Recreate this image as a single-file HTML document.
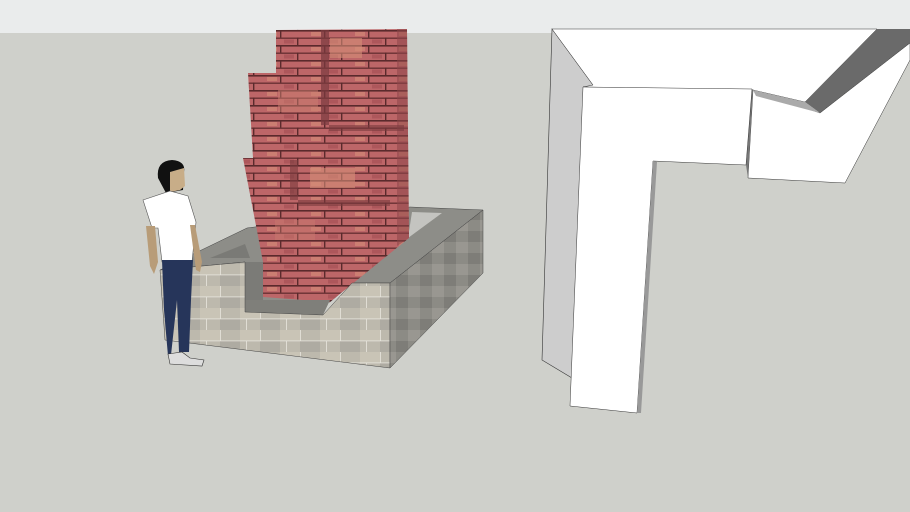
<!DOCTYPE html>
<html><head><meta charset="utf-8"><style>
html,body{margin:0;padding:0;width:910px;height:512px;overflow:hidden;background:#cfd0cb}
svg{display:block}
</style></head><body>
<svg width="910" height="512" viewBox="0 0 910 512" xmlns="http://www.w3.org/2000/svg">
<defs>
<pattern id="brick" width="44" height="15" patternUnits="userSpaceOnUse">
<rect width="44" height="15" fill="#bd6668"/>
<rect x="0" y="0" width="44" height="1.6" fill="#5a2a2c"/>
<rect x="0" y="7.5" width="44" height="1.4" fill="#6a3134"/>
<rect x="16" y="0" width="1.4" height="7.5" fill="#5a2a2c"/>
<rect x="33" y="7.5" width="1.4" height="7.5" fill="#5a2a2c"/>
<rect x="3" y="2" width="10" height="4" fill="#cc7e72"/>
<rect x="20" y="9.5" width="10" height="4" fill="#ad575b"/>
</pattern>
<pattern id="block" width="40" height="22" patternUnits="userSpaceOnUse">
<rect width="40" height="22" fill="#bdb9ad"/>
<rect x="0" y="0" width="20" height="11" fill="#c9c4b6"/>
<rect x="20" y="11" width="20" height="11" fill="#aeaba2"/>
<rect x="0" y="10.5" width="40" height="0.8" fill="#e8e6de"/>
<rect x="20" y="0" width="0.8" height="11" fill="#e8e6de"/>
<rect x="6" y="11" width="0.8" height="11" fill="#e8e6de"/>
</pattern>
<pattern id="blockD" width="24" height="22" patternUnits="userSpaceOnUse">
<rect width="24" height="22" fill="#8c8b85"/>
<rect x="0" y="0" width="12" height="11" fill="#999791"/>
<rect x="12" y="11" width="12" height="11" fill="#7e7d78"/>
</pattern>
</defs>
<rect x="0" y="0" width="910" height="33" fill="#eaecec"/>
<rect x="0" y="33" width="910" height="479" fill="#cfd0cb"/>

<!-- white L structure -->
<polygon points="552,29 593,85 572,378 542,360" fill="#cdcdcd" stroke="#333" stroke-width="0.6"/>
<polygon points="552,29 877,29 805,102 753,90 583,87 593,85" fill="#fff" stroke="#333" stroke-width="0.5"/>
<polygon points="877,29 910,29 910,43 820,113 805,102" fill="#6a6a6a"/>
<polygon points="753,90 820,113 910,43 910,60 845,183 748,178" fill="#fff" stroke="#333" stroke-width="0.5"/>
<polygon points="753,90 805,102 820,113 756,96" fill="#aaa"/>
<polygon points="753,90 748,178 746,165 752,89" fill="#777"/>
<polygon points="583,87 752,89 746,165 653,161 637,413 570,406" fill="#fff" stroke="#333" stroke-width="0.5"/>
<polygon points="653,161 657,162 641,413 637,413" fill="#999"/>

<!-- planter top surfaces -->
<polygon points="160,270 247,228 410,207 483,210 390,283 352,283 330,302 245,307 245,262" fill="#8d8d88" stroke="#444" stroke-width="0.5"/>
<polygon points="412,212 442,213 408,238" fill="#c4c4c0"/>
<polygon points="210,258 245,244 250,258" fill="#7a7a76"/>

<!-- brick column -->
<polygon points="276,30 407,29 409,238 330,302 263,297 263,262 243,158 253,158 248,73 276,73" fill="url(#brick)"/>
<polygon points="397,29 407,29 409,238 397,246" fill="#8e4649" opacity="0.55"/>
<polygon points="321,30 329,30 329,125 321,125" fill="#7a3b3e" opacity="0.7"/>
<polygon points="329,125 404,125 404,131 329,131" fill="#7a3b3e" opacity="0.6"/>
<polygon points="290,160 298,160 298,200 290,200" fill="#7a3b3e" opacity="0.6"/>
<polygon points="298,200 390,200 390,206 298,206" fill="#7a3b3e" opacity="0.6"/>
<rect x="310" y="168" width="45" height="20" fill="#d48e78" opacity="0.6"/>
<rect x="330" y="38" width="32" height="20" fill="#d48e78" opacity="0.6"/>
<rect x="278" y="90" width="40" height="22" fill="#cc7e70" opacity="0.5"/>
<rect x="275" y="220" width="40" height="20" fill="#cc7e70" opacity="0.4"/>

<!-- planter front walls -->
<polygon points="245,262 263,262 263,300 245,307" fill="#7b7b77"/>
<polygon points="245,300 330,300 323,315 245,312" fill="#7f7f7a"/>
<polygon points="160,270 245,262 245,312 323,315 352,283 390,283 390,368 165,340" fill="url(#block)" stroke="#444" stroke-width="0.5"/>
<polygon points="390,283 483,210 483,273 390,368" fill="url(#blockD)" stroke="#444" stroke-width="0.5"/>

<!-- person -->
<path d="M158,178 Q156,161 172,160 Q186,161 184,172 L183,190 L166,193 Z" fill="#111"/>
<path d="M170,172 L184,168 L185,186 L180,190 L170,192 Z" fill="#c8ad88"/>
<path d="M143,200 L170,191 L188,196 L196,222 L192,262 L162,262 L158,228 L152,228 Z" fill="#fff" stroke="#555" stroke-width="0.6"/>
<path d="M146,226 L155,226 L158,262 L154,274 L150,266 Z" fill="#b89c78"/>
<path d="M190,225 L195,225 L202,262 L200,272 L196,270 Z" fill="#b89c78"/>
<path d="M162,260 L193,260 L191,300 L189,352 L179,352 L177,300 L171,355 L168,356 L164,310 Z" fill="#26355a"/>
<path d="M168,354 L182,352 L190,358 L204,360 L202,366 L170,364 Z" fill="#ddd" stroke="#333" stroke-width="0.6"/>
</svg>
</body></html>
